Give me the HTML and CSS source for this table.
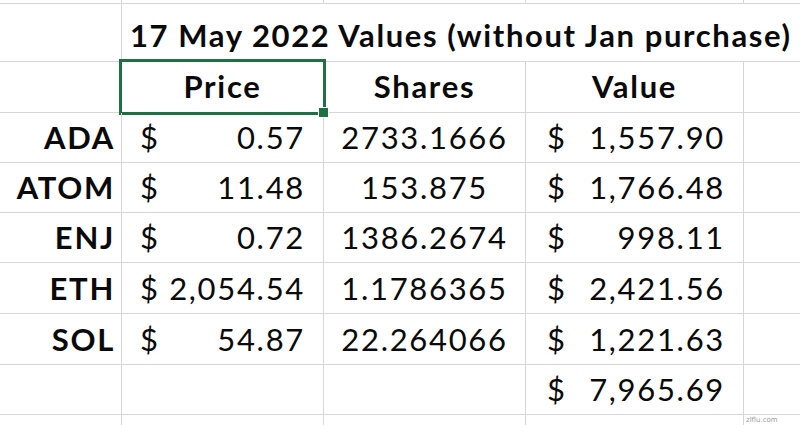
FILE: index.html
```html
<!DOCTYPE html>
<html>
<head>
<meta charset="utf-8">
<link rel="stylesheet" href="styles.css">
</head>
<body>
<div class="sheet">
  <div class="c lbl top"></div><div class="c top"></div><div class="c top"></div><div class="c top"></div><div class="c top last"></div>

  <div class="c lbl"></div>
  <div class="c title">17 May 2022 Values (without Jan purchase)</div>

  <div class="c lbl"></div>
  <div class="c hd sel">Price</div>
  <div class="c hd">Shares</div>
  <div class="c hd">Value</div>
  <div class="c last"></div>

  <div class="c lbl">ADA</div>
  <div class="c acc price"><span>$</span><span>0.57</span></div>
  <div class="c ctr">2733.1666</div>
  <div class="c acc val"><span>$</span><span>1,557.90</span></div>
  <div class="c last"></div>

  <div class="c lbl">ATOM</div>
  <div class="c acc price"><span>$</span><span>11.48</span></div>
  <div class="c ctr">153.875</div>
  <div class="c acc val"><span>$</span><span>1,766.48</span></div>
  <div class="c last"></div>

  <div class="c lbl">ENJ</div>
  <div class="c acc price"><span>$</span><span>0.72</span></div>
  <div class="c ctr">1386.2674</div>
  <div class="c acc val"><span>$</span><span>998.11</span></div>
  <div class="c last"></div>

  <div class="c lbl">ETH</div>
  <div class="c acc price"><span>$</span><span>2,054.54</span></div>
  <div class="c ctr">1.1786365</div>
  <div class="c acc val"><span>$</span><span>2,421.56</span></div>
  <div class="c last"></div>

  <div class="c lbl">SOL</div>
  <div class="c acc price"><span>$</span><span>54.87</span></div>
  <div class="c ctr">22.264066</div>
  <div class="c acc val"><span>$</span><span>1,221.63</span></div>
  <div class="c last"></div>

  <div class="c lbl"></div>
  <div class="c"></div>
  <div class="c"></div>
  <div class="c acc val"><span>$</span><span>7,965.69</span></div>
  <div class="c last"></div>

  <div class="c lbl"></div>
  <div class="c"></div>
  <div class="c"></div>
  <div class="c"></div>
  <div class="c last"><span class="wm">zlflu.com</span></div>
</div>
</body>
</html>
```

FILE: styles.css
```css
* { box-sizing: border-box; }
html, body {
  margin: 0;
  padding: 0;
  background: #ffffff;
  overflow: hidden;
}
body {
  font-family: Lato, "Liberation Sans", sans-serif;
  color: #0a0a0a;
  width: 800px;
  height: 425px;
}
.sheet {
  display: grid;
  grid-template-columns: 122px 202px 202px 218px 56px;
  grid-template-rows: 4px 58px 51px 50px 50px 50px 51px 51px 50px 20px;
}
.c {
  border-right: 1px solid #d6d6d6;
  border-bottom: 1px solid #d6d6d6;
  font-size: 31px;
  letter-spacing: 1.7px;
  line-height: 1;
  display: flex;
  align-items: flex-end;
  padding-bottom: 9px;
  white-space: nowrap;
  position: relative;
}
.c.top { padding: 0; }
.c.last { border-right: none; }
.lbl {
  justify-content: flex-end;
  padding-right: 6px;
  font-weight: 700;
}
.title {
  grid-column: 2 / span 4;
  border-right: none;
  font-weight: 700;
  padding-left: 8px;
  padding-bottom: 10px;
  letter-spacing: 1.6px;
}
.hd {
  justify-content: center;
  font-weight: 700;
  padding-bottom: 10px;
}
.ctr {
  justify-content: center;
}
.acc {
  justify-content: space-between;
}
.acc.price {
  padding-left: 18px;
  padding-right: 18px;
}
.acc.val {
  padding-left: 21px;
  padding-right: 18px;
}
.sel::after {
  content: "";
  position: absolute;
  left: -3px;
  top: -3px;
  right: -3px;
  bottom: -3px;
  border: 3px solid #1f7145;
}
.sel::before {
  content: "";
  position: absolute;
  right: -6px;
  bottom: -6px;
  width: 9px;
  height: 9px;
  background: #1f7145;
  border: 1px solid #ffffff;
  z-index: 2;
}
.wm {
  font-size: 7px;
  letter-spacing: 0;
  color: #9a9a9a;
  position: absolute;
  left: 2px;
  top: 2px;
  font-family: "DejaVu Sans", sans-serif;
}
```
